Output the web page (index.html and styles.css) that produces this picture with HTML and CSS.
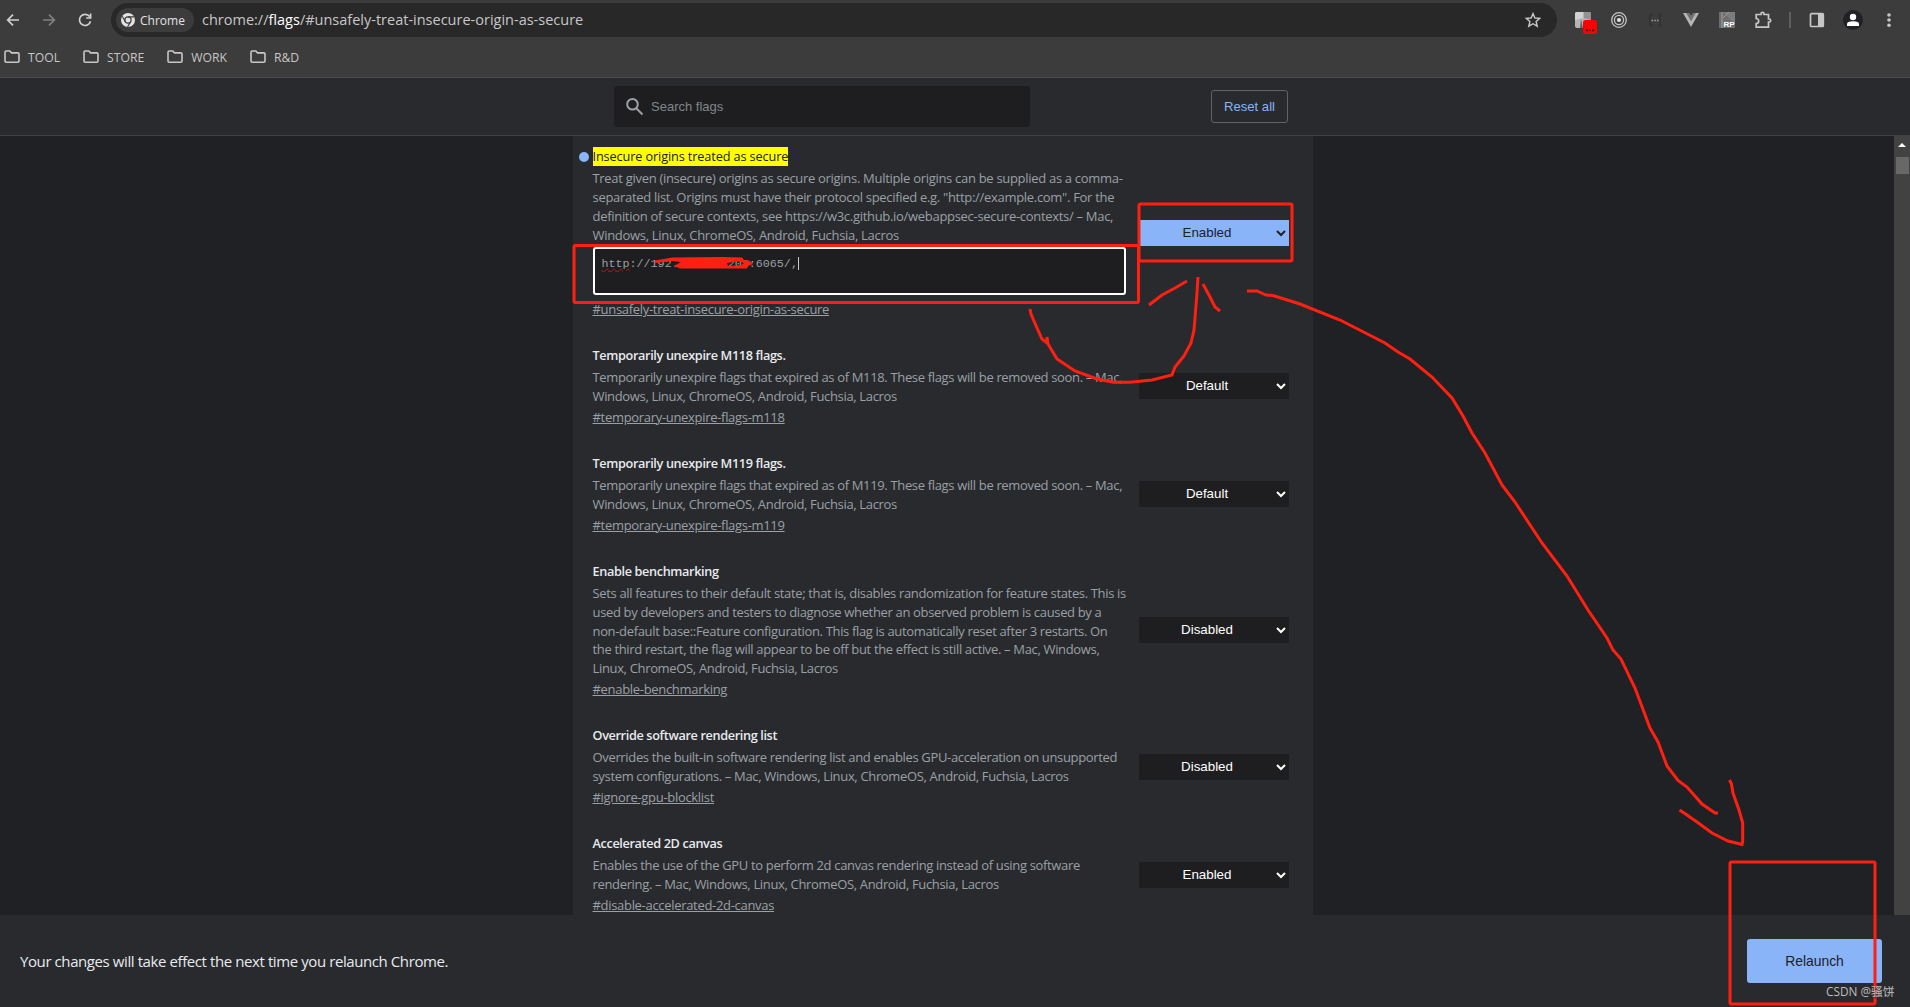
FILE: index.html
```html
<!DOCTYPE html>
<html lang="en">
<head>
  <meta charset="UTF-8" />
  <meta name="viewport" content="width=device-width, initial-scale=1.0" />
  <title>Experiments</title>
  <link rel="stylesheet" href="styles.css">
</head>
<body>
  <div class="browser">
    <div class="toolbar">
      <div class="nav-row">
        <div class="nav-buttons">
          <svg class="icon" viewBox="0 0 16 16"><path d="M14 8H3M8 2.7L2.7 8L8 13.3" /></svg>
          <svg class="icon disabled" viewBox="0 0 16 16"><path d="M2 8h11M8 2.7L13.3 8L8 13.3" /></svg>
          <svg class="icon" viewBox="0 0 16 16"><path d="M12.6 4.6A5.6 5.6 0 1 0 13.5 9.2M13.6 1.6V6H9.2" /></svg>
        </div>
        <div class="omnibox">
          <div class="chip">
            <svg class="logo" viewBox="0 0 14 14">
              <circle cx="7" cy="7" r="7" fill="#e3e3e3" />
              <circle cx="7" cy="7" r="3.1" fill="#e3e3e3" stroke="#3c3c3c" stroke-width="1.2" />
              <path d="M7 3.9H13.3M4.3 8.6L1.2 3.3M9.7 8.6L6.6 13.9" stroke="#3c3c3c" stroke-width="1.1" />
            </svg>
            <span>Chrome</span>
          </div>
          <div class="url">chrome://<b>flags</b>/#unsafely-treat-insecure-origin-as-secure</div>
          <svg class="star" viewBox="0 0 16 16"><path d="M8 1.6L9.9 6L14.7 6.4L11.1 9.5L12.2 14.2L8 11.7L3.8 14.2L4.9 9.5L1.3 6.4L6.1 6Z" /></svg>
        </div>
        <div class="extensions">
          <div class="ext">
            <svg width="24" height="24" viewBox="0 0 24 24" class="badged">
              <rect x="0" y="0" width="16" height="16" rx="2" fill="#b4b4b4" />
              <path d="M0 8V2Q0 0 2 0H8V6Z" fill="#d2d2d2" />
              <path d="M9 0H14Q16 0 16 2V8L9 6Z" fill="#929292" />
              <path d="M6 7L8 16H5Z" fill="#646464" />
              <rect x="8" y="8" width="14" height="14" rx="2.5" fill="#ff0000" />
              <path d="M11 18.3h2M14 18.3h2M17 18.3h2" stroke="#5a0000" stroke-width="2" />
            </svg>
          </div>
          <div class="ext">
            <svg width="16" height="16" viewBox="0 0 16 16" fill="none" stroke="#c4c4c4" stroke-width="1.3">
              <circle cx="8" cy="8" r="7.3" /><circle cx="8" cy="8" r="4.6" /><circle cx="8" cy="8" r="2.1" fill="#e0e0e0" stroke="none" />
            </svg>
          </div>
          <div class="ext">
            <svg width="14" height="14" viewBox="0 0 14 14">
              <path d="M4 1.5H2V12.5H4M10 1.5H12V12.5H10" fill="none" stroke="#313131" stroke-width="1.6" />
              <path d="M3.5 7.5h1.5M6.3 7.5h1.5M9 7.5h1.5" stroke="#a0a0a0" stroke-width="1.5" />
            </svg>
          </div>
          <div class="ext">
            <svg width="16" height="14" viewBox="0 0 16 14">
              <path d="M0 0H6L8 3.5L10 0H16L8 14Z" fill="#b5b5b5" />
              <path d="M3.2 0H6L8 3.5L10 0H12.8L8 8.3Z" fill="#6f6f6f" />
            </svg>
          </div>
          <div class="ext">
            <svg width="16" height="16" viewBox="0 0 16 16">
              <rect width="16" height="16" fill="#6e6e6e" />
              <path d="M4 0L16 12V0Z" fill="#7d7d7d" />
              <path d="M3 0V16" stroke="#a0a0a0" />
              <path d="M4 6L10 0" stroke="#999" />
              <text x="4.5" y="15" class="rp">RP</text>
            </svg>
          </div>
          <div class="ext">
            <svg width="18" height="18" viewBox="0 0 18 18"><path class="outline" d="M2.2 3.5H7V2.8A1.5 1.5 0 0 1 10 2.8V3.5H14.5V8H15.2A1.5 1.5 0 0 1 15.2 11H14.5V16.2H2.2V12.5A2.2 2.2 0 0 0 2.2 7.5Z" /></svg>
          </div>
          <span class="separator"></span>
          <div class="ext">
            <svg width="16" height="16" viewBox="0 0 16 16"><rect class="outline" x="1.5" y="1.7" width="12.8" height="12.8" rx="1" /><path d="M9 1.5H14.5V14.5H9Z" fill="#c7c7c7" /></svg>
          </div>
          <div class="ext">
            <svg width="20" height="20" viewBox="0 0 20 20"><circle cx="10" cy="10" r="10" fill="#202124" /><circle cx="10" cy="7" r="3.2" fill="#fff" /><path d="M4 16V14Q4 11.3 10 11.3T16 14V16Z" fill="#fff" /></svg>
          </div>
          <div class="ext">
            <svg width="4" height="16" viewBox="0 0 4 16" fill="#c7c7c7"><circle cx="2" cy="3" r="1.8" /><circle cx="2" cy="8" r="1.8" /><circle cx="2" cy="13.2" r="1.8" /></svg>
          </div>
        </div>
      </div>
      <div class="bookmarks">
        <a><svg class="folder" viewBox="0 0 16 14"><path d="M1 2.2Q1 1 2.2 1H5.8L7.5 2.9H13.8Q15 2.9 15 4.1V11Q15 12.2 13.8 12.2H2.2Q1 12.2 1 11Z" /></svg>TOOL</a>
        <a><svg class="folder" viewBox="0 0 16 14"><path d="M1 2.2Q1 1 2.2 1H5.8L7.5 2.9H13.8Q15 2.9 15 4.1V11Q15 12.2 13.8 12.2H2.2Q1 12.2 1 11Z" /></svg>STORE</a>
        <a><svg class="folder" viewBox="0 0 16 14"><path d="M1 2.2Q1 1 2.2 1H5.8L7.5 2.9H13.8Q15 2.9 15 4.1V11Q15 12.2 13.8 12.2H2.2Q1 12.2 1 11Z" /></svg>WORK</a>
        <a><svg class="folder" viewBox="0 0 16 14"><path d="M1 2.2Q1 1 2.2 1H5.8L7.5 2.9H13.8Q15 2.9 15 4.1V11Q15 12.2 13.8 12.2H2.2Q1 12.2 1 11Z" /></svg>R&amp;D</a>
      </div>
    </div>

    <div class="flags-header">
      <div class="search">
        <svg width="20" height="20" viewBox="0 0 20 20"><circle cx="7.5" cy="7.3" r="5.3" /><path d="M11.5 11.5L17.5 17.5" /></svg>
        <span>Search flags</span>
      </div>
      <button class="reset">Reset all</button>
    </div>

    <div class="content">
      <div class="panel">
        <div class="flag">
          <div class="info">
            <h2 class="changed"><mark>Insecure origins treated as secure</mark></h2>
            <p>Treat given (insecure) origins as secure origins. Multiple origins can be supplied as a comma-<br>separated list. Origins must have their protocol specified e.g. "http://example.com". For the<br>definition of secure contexts, see https://w3c.github.io/webappsec-secure-contexts/ – Mac,<br>Windows, Linux, ChromeOS, Android, Fuchsia, Lacros</p>
            <div class="origins"><span class="typo">http</span>://192.1      203:6065/,<i class="caret"></i></div>
            <a class="link">#unsafely-treat-insecure-origin-as-secure</a>
          </div>
          <select class="on"><option>Enabled</option></select>
        </div>
        <div class="flag">
          <div class="info">
            <h2>Temporarily unexpire M118 flags.</h2>
            <p>Temporarily unexpire flags that expired as of M118. These flags will be removed soon. – Mac,<br>Windows, Linux, ChromeOS, Android, Fuchsia, Lacros</p>
            <a class="link">#temporary-unexpire-flags-m118</a>
          </div>
          <select><option>Default</option></select>
        </div>
        <div class="flag">
          <div class="info">
            <h2>Temporarily unexpire M119 flags.</h2>
            <p>Temporarily unexpire flags that expired as of M119. These flags will be removed soon. – Mac,<br>Windows, Linux, ChromeOS, Android, Fuchsia, Lacros</p>
            <a class="link">#temporary-unexpire-flags-m119</a>
          </div>
          <select><option>Default</option></select>
        </div>
        <div class="flag">
          <div class="info">
            <h2>Enable benchmarking</h2>
            <p>Sets all features to their default state; that is, disables randomization for feature states. This is<br>used by developers and testers to diagnose whether an observed problem is caused by a<br>non-default base::Feature configuration. This flag is automatically reset after 3 restarts. On<br>the third restart, the flag will appear to be off but the effect is still active. – Mac, Windows,<br>Linux, ChromeOS, Android, Fuchsia, Lacros</p>
            <a class="link">#enable-benchmarking</a>
          </div>
          <select><option>Disabled</option></select>
        </div>
        <div class="flag">
          <div class="info">
            <h2>Override software rendering list</h2>
            <p>Overrides the built-in software rendering list and enables GPU-acceleration on unsupported<br>system configurations. – Mac, Windows, Linux, ChromeOS, Android, Fuchsia, Lacros</p>
            <a class="link">#ignore-gpu-blocklist</a>
          </div>
          <select><option>Disabled</option></select>
        </div>
        <div class="flag">
          <div class="info">
            <h2>Accelerated 2D canvas</h2>
            <p>Enables the use of the GPU to perform 2d canvas rendering instead of using software<br>rendering. – Mac, Windows, Linux, ChromeOS, Android, Fuchsia, Lacros</p>
            <a class="link">#disable-accelerated-2d-canvas</a>
          </div>
          <select><option>Enabled</option></select>
        </div>
      </div>
      <div class="scrollbar">
        <svg width="8" height="4" viewBox="0 0 8 4"><path d="M0 4L4 0L8 4Z" fill="#fff" /></svg>
        <div class="thumb"></div>
      </div>
    </div>

    <div class="restart">
      <span>Your changes will take effect the next time you relaunch Chrome.</span>
      <button class="relaunch">Relaunch</button>
    </div>
  </div>

  <!-- red pen marks -->
  <svg class="pen" viewBox="0 0 1910 1007">
    <rect x="574" y="245.5" width="564.5" height="57" rx="1.5" />
    <rect x="1139" y="204" width="153" height="57" rx="1.5" />
    <rect x="1730" y="862" width="145" height="142" rx="1.5" />
    <path d="M1030 309L1031 314L1037 328L1042 339L1047 343L1047 337L1048 344L1057 359L1075 371L1097 379L1113 382.3H1130L1152 380L1172 375L1175 367L1184 356L1191 343L1194 330L1197 293L1198 277" />
    <path d="M1149 305L1162 295L1175 288L1187 281" />
    <path d="M1203 284L1210 297L1215 307L1220 311" />
    <path d="M1247 291H1257L1266 295L1273 295.5L1300 304L1340 320L1385 343L1398 352L1410 359L1432 377L1452 398L1463 416L1472 433L1485 453L1502 485L1515 502L1542 543L1567 576L1588 610L1607 638L1613 650L1621 659L1635 688L1650 728L1658 742L1667 766L1678 780.5L1687 787L1702 804L1715 813L1718 813" />
    <path d="M1679.5 810L1687 815L1697 822L1712 833L1728 841L1742 844.5L1742.7 841V823L1739 810L1733 793L1731.5 784L1729.5 780" />
    <path class="scribble" d="M655 263L655 260.5L672 257.5L724 257L742 257.5L744 260L749 260.5L753 264L748 266L747 268.5H680L674 266L681 262L672 261Z M727 263L738 261.5L744 263L741 265L728 266Z" />
  </svg>
  <div class="watermark">CSDN @骚饼</div>
</body>
</html>
```
FILE: styles.css
```css
body, html {
  margin: 0;
  padding: 0;
  height: 100%;
  overflow: hidden;
  background: #202124;
  font-family: 'Open Sans', 'Noto Sans CJK SC', sans-serif;
}
.browser {
  display: flex;
  flex-direction: column;
  height: 1007px;
}

/* toolbar */
.toolbar {
  height: 77px;
  background: #3c3c3c;
  border-bottom: 1px solid #4a4a4b;
}
.nav-row {
  display: flex;
  height: 34px;
  padding-top: 3px;
}
.nav-buttons {
  display: flex;
  align-items: center;
  gap: 20px;
  width: 106px;
  padding-left: 5px;
}
.icon {
  width: 16px;
  height: 16px;
  fill: none;
  stroke: #d0d0d0;
  stroke-width: 1.7;
}
.icon.disabled { stroke: #808080; }
.omnibox {
  display: flex;
  align-items: center;
  width: 1446px;
  height: 34px;
  box-sizing: border-box;
  padding: 0 16px 0 5px;
  border-radius: 17px;
  background: #282828;
}
.chip {
  display: flex;
  align-items: center;
  gap: 5px;
  width: 78px;
  height: 24px;
  box-sizing: border-box;
  padding-left: 5px;
  border-radius: 12px;
  background: #3c3c3c;
  color: #e3e3e3;
  font-size: 12px;
}
.logo { width: 14px; height: 14px; }
.url {
  flex: 1;
  margin-left: 8px;
  padding-bottom: 2px;
  font-size: 14.5px;
  color: #c7c7c7;
}
.url b { font-weight: 400; color: #fff; }
.star {
  width: 16px;
  height: 16px;
  fill: none;
  stroke: #c7c7c7;
  stroke-width: 1.4;
}
.extensions {
  display: flex;
  align-items: center;
  margin-left: 8px;
}
.ext {
  display: flex;
  align-items: center;
  justify-content: center;
  width: 36px;
  height: 34px;
}
.badged { margin: 8px -8px 0 0; }
.outline {
  fill: none;
  stroke: #c7c7c7;
  stroke-width: 1.7;
}
.rp {
  font: bold 8px 'Liberation Sans', sans-serif;
  fill: #fff;
}
.separator {
  width: 2px;
  height: 16px;
  margin: 0 8px;
  background: #5f5f5f;
}
.bookmarks {
  display: flex;
  align-items: center;
  gap: 23px;
  height: 40px;
  padding-left: 4px;
  font-size: 12.2px;
  color: #c7c7c7;
}
.bookmarks a {
  display: flex;
  align-items: center;
  gap: 8px;
}
.folder {
  width: 16px;
  height: 14px;
  fill: none;
  stroke: #c7c7c7;
  stroke-width: 1.6;
}

/* search bar */
.flags-header {
  display: flex;
  align-items: center;
  height: 57px;
  padding-left: 614px;
  background: #292a2d;
  border-bottom: 1px solid #3f4042;
}
.search {
  display: flex;
  align-items: center;
  gap: 6px;
  width: 416px;
  height: 41px;
  box-sizing: border-box;
  padding-left: 11px;
  border-radius: 3px;
  background: #1e1e20;
  color: #80868b;
  font: 13px 'Liberation Sans', sans-serif;
}
.search svg {
  fill: none;
  stroke: #9aa0a6;
  stroke-width: 2;
}
.reset {
  width: 77px;
  height: 33px;
  margin-left: 181px;
  padding: 0;
  border: 1px solid #5f6368;
  border-radius: 3px;
  background: transparent;
  color: #8ab4f8;
  font: 13.1px 'Liberation Sans', sans-serif;
}

/* flags list */
.content {
  display: flex;
  flex: 1;
  min-height: 0;
  overflow: hidden;
}
.panel {
  width: 740px;
  margin-left: 573px;
  box-sizing: border-box;
  padding: 11px 24px 0 19.5px;
  background: #292a2d;
}
.flag {
  display: flex;
  align-items: center;
  justify-content: space-between;
  margin-bottom: 27.5px;
}
.flag:first-child { margin-bottom: 26.6px; }
.info { width: 533px; }
h2 {
  margin: 0 0 3px;
  font-size: 12.7px;
  font-weight: 600;
  line-height: 19px;
  letter-spacing: -0.36px;
  color: #e8eaed;
  white-space: nowrap;
}
.changed {
  display: flex;
  align-items: center;
  margin-left: -14px;
}
.changed::before {
  content: '';
  width: 10px;
  height: 10px;
  margin-right: 4px;
  border-radius: 50%;
  background: #8ab4f8;
}
mark {
  background: #ff0;
  color: #202124;
  font-weight: 500;
  letter-spacing: -0.11px;
}
p {
  margin: 0;
  font-size: 13px;
  line-height: 18.85px;
  letter-spacing: -0.34px;
  color: #9aa0a6;
  white-space: nowrap;
}
.flag:first-child p { letter-spacing: -0.3px; }
.link {
  display: block;
  margin-top: 2px;
  font-size: 13px;
  line-height: 18.85px;
  letter-spacing: -0.31px;
  color: #9aa0a6;
  text-decoration: underline;
}
.origins {
  height: 48px;
  margin: 3px 0 5px;
  box-sizing: border-box;
  padding: 8px 7px;
  border: 2px solid #fff;
  border-radius: 3px;
  background: #1e1e20;
  color: #9aa0a6;
  font: 11.7px/14px 'Liberation Mono', monospace;
  white-space: pre;
}
.typo {
  text-decoration: underline wavy #d01010 1px;
}
.caret {
  display: inline-block;
  width: 1px;
  height: 13px;
  background: #c8c8c8;
  vertical-align: -3px;
}
select {
  width: 150px;
  height: 26px;
  padding: 0 2px 1px 0;
  border: none;
  border-radius: 0;
  background: #1e1e20;
  color: #fff;
  font: 13.33px 'Liberation Sans', sans-serif;
  text-align: center;
}
select.on {
  background: #8ab4f8;
  color: #202124;
}
.scrollbar {
  display: flex;
  flex-direction: column;
  align-items: center;
  width: 16px;
  margin-left: auto;
  padding-top: 7px;
  box-sizing: border-box;
  background: #424242;
}
.thumb {
  width: 13px;
  height: 17px;
  margin-top: 10px;
  background: #686868;
}

/* relaunch bar */
.restart {
  display: flex;
  align-items: center;
  justify-content: space-between;
  height: 92px;
  box-sizing: border-box;
  padding: 0 28px 0 20px;
  background: #292a2d;
  color: #e8eaed;
  font-size: 15px;
  letter-spacing: -0.41px;
}
.relaunch {
  width: 135px;
  height: 44px;
  border: none;
  border-radius: 3px;
  background: #8ab4f8;
  color: #202124;
  font: 13.9px 'Liberation Sans', sans-serif;
}

.pen {
  position: absolute;
  top: 0;
  left: 0;
  width: 1910px;
  height: 1007px;
  fill: none;
  stroke: #ff2012;
  stroke-width: 3;
  pointer-events: none;
}
.pen .scribble {
  fill: #ff2012;
  fill-rule: evenodd;
  stroke: none;
}
.watermark {
  position: absolute;
  top: 982px;
  left: 1826px;
  font-size: 11.8px;
  line-height: 18px;
  color: #bdbdbd;
  text-shadow: 1px 1px 1px #333;
  white-space: nowrap;
}
```
